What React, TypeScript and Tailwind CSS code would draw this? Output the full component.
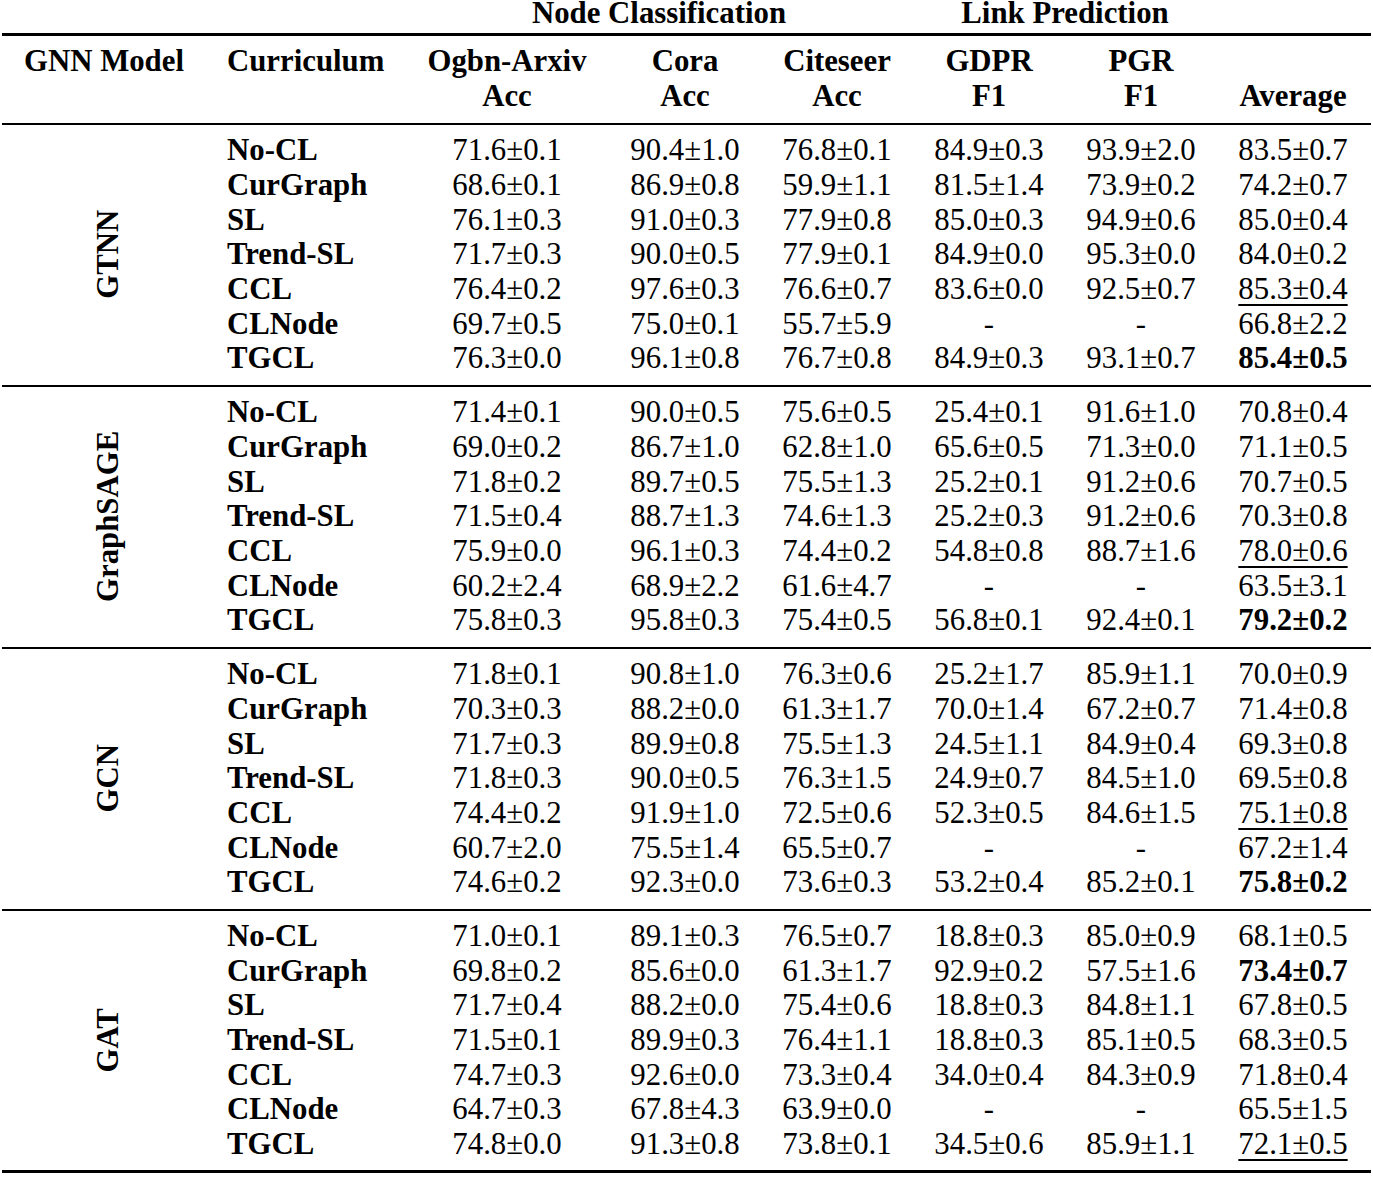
import React from "react";

type Cell = string | { v: string; b?: boolean; u?: boolean };

type Row = { name: string; cells: Cell[] };

const GROUPS: { model: string; rows: Row[] }[] = [
  {
    model: "GTNN",
    rows: [
      { name: "No-CL", cells: ["71.6±0.1", "90.4±1.0", "76.8±0.1", "84.9±0.3", "93.9±2.0", "83.5±0.7"] },
      { name: "CurGraph", cells: ["68.6±0.1", "86.9±0.8", "59.9±1.1", "81.5±1.4", "73.9±0.2", "74.2±0.7"] },
      { name: "SL", cells: ["76.1±0.3", "91.0±0.3", "77.9±0.8", "85.0±0.3", "94.9±0.6", "85.0±0.4"] },
      { name: "Trend-SL", cells: ["71.7±0.3", "90.0±0.5", "77.9±0.1", "84.9±0.0", "95.3±0.0", "84.0±0.2"] },
      { name: "CCL", cells: ["76.4±0.2", "97.6±0.3", "76.6±0.7", "83.6±0.0", "92.5±0.7", { v: "85.3±0.4", u: true }] },
      { name: "CLNode", cells: ["69.7±0.5", "75.0±0.1", "55.7±5.9", "-", "-", "66.8±2.2"] },
      { name: "TGCL", cells: ["76.3±0.0", "96.1±0.8", "76.7±0.8", "84.9±0.3", "93.1±0.7", { v: "85.4±0.5", b: true }] },
    ],
  },
  {
    model: "GraphSAGE",
    rows: [
      { name: "No-CL", cells: ["71.4±0.1", "90.0±0.5", "75.6±0.5", "25.4±0.1", "91.6±1.0", "70.8±0.4"] },
      { name: "CurGraph", cells: ["69.0±0.2", "86.7±1.0", "62.8±1.0", "65.6±0.5", "71.3±0.0", "71.1±0.5"] },
      { name: "SL", cells: ["71.8±0.2", "89.7±0.5", "75.5±1.3", "25.2±0.1", "91.2±0.6", "70.7±0.5"] },
      { name: "Trend-SL", cells: ["71.5±0.4", "88.7±1.3", "74.6±1.3", "25.2±0.3", "91.2±0.6", "70.3±0.8"] },
      { name: "CCL", cells: ["75.9±0.0", "96.1±0.3", "74.4±0.2", "54.8±0.8", "88.7±1.6", { v: "78.0±0.6", u: true }] },
      { name: "CLNode", cells: ["60.2±2.4", "68.9±2.2", "61.6±4.7", "-", "-", "63.5±3.1"] },
      { name: "TGCL", cells: ["75.8±0.3", "95.8±0.3", "75.4±0.5", "56.8±0.1", "92.4±0.1", { v: "79.2±0.2", b: true }] },
    ],
  },
  {
    model: "GCN",
    rows: [
      { name: "No-CL", cells: ["71.8±0.1", "90.8±1.0", "76.3±0.6", "25.2±1.7", "85.9±1.1", "70.0±0.9"] },
      { name: "CurGraph", cells: ["70.3±0.3", "88.2±0.0", "61.3±1.7", "70.0±1.4", "67.2±0.7", "71.4±0.8"] },
      { name: "SL", cells: ["71.7±0.3", "89.9±0.8", "75.5±1.3", "24.5±1.1", "84.9±0.4", "69.3±0.8"] },
      { name: "Trend-SL", cells: ["71.8±0.3", "90.0±0.5", "76.3±1.5", "24.9±0.7", "84.5±1.0", "69.5±0.8"] },
      { name: "CCL", cells: ["74.4±0.2", "91.9±1.0", "72.5±0.6", "52.3±0.5", "84.6±1.5", { v: "75.1±0.8", u: true }] },
      { name: "CLNode", cells: ["60.7±2.0", "75.5±1.4", "65.5±0.7", "-", "-", "67.2±1.4"] },
      { name: "TGCL", cells: ["74.6±0.2", "92.3±0.0", "73.6±0.3", "53.2±0.4", "85.2±0.1", { v: "75.8±0.2", b: true }] },
    ],
  },
  {
    model: "GAT",
    rows: [
      { name: "No-CL", cells: ["71.0±0.1", "89.1±0.3", "76.5±0.7", "18.8±0.3", "85.0±0.9", "68.1±0.5"] },
      { name: "CurGraph", cells: ["69.8±0.2", "85.6±0.0", "61.3±1.7", "92.9±0.2", "57.5±1.6", { v: "73.4±0.7", b: true }] },
      { name: "SL", cells: ["71.7±0.4", "88.2±0.0", "75.4±0.6", "18.8±0.3", "84.8±1.1", "67.8±0.5"] },
      { name: "Trend-SL", cells: ["71.5±0.1", "89.9±0.3", "76.4±1.1", "18.8±0.3", "85.1±0.5", "68.3±0.5"] },
      { name: "CCL", cells: ["74.7±0.3", "92.6±0.0", "73.3±0.4", "34.0±0.4", "84.3±0.9", "71.8±0.4"] },
      { name: "CLNode", cells: ["64.7±0.3", "67.8±4.3", "63.9±0.0", "-", "-", "65.5±1.5"] },
      { name: "TGCL", cells: ["74.8±0.0", "91.3±0.8", "73.8±0.1", "34.5±0.6", "85.9±1.1", { v: "72.1±0.5", u: true }] },
    ],
  },
];

// columns to the right of the model column
const COLS = "grid grid-cols-[226px_178px_152px_152px_152px_152px_152px]";

function Value({ c, first }: { c: Cell; first?: boolean }) {
  const v = typeof c === "string" ? c : c.v;
  const b = typeof c !== "string" && c.b;
  const u = typeof c !== "string" && c.u;
  return (
    <div className={`flex justify-center whitespace-nowrap ${first ? "pr-[26px]" : ""}`}>
      <span
        className={`${b ? "font-bold" : ""} ${u ? "underline decoration-[1.5px] underline-offset-[5px]" : ""}`}
      >
        {v}
      </span>
    </div>
  );
}

function Head({ top, bottom, first }: { top?: string; bottom: string; first?: boolean }) {
  return (
    <div className={`flex flex-col items-center whitespace-nowrap ${first ? "pr-[26px]" : ""}`}>
      <span>{top ?? "\u00a0"}</span>
      <span>{bottom}</span>
    </div>
  );
}

export default function App() {
  return (
    <div
      className="w-[1373px] h-[1177px] bg-white text-black text-[30.8px] leading-[34.67px]"
      style={{ fontFamily: "'Liberation Serif', 'Times New Roman', serif" }}
    >
      <div className="ml-[2px] w-[1369px]">
        {/* task heading */}
        <div className="flex h-[33px] font-bold">
          <div className="w-[203px]" />
          <div className={COLS + " -mt-[4px] whitespace-nowrap"}>
            <div />
            <div className="col-span-3 pr-[26px] text-center">Node Classification</div>
            <div className="col-span-2 text-center">Link Prediction</div>
            <div />
          </div>
        </div>

        {/* column header */}
        <div className="flex border-t-[3px] border-black pt-[8px] pb-[9.5px] font-bold">
          <div className="w-[203px] text-center pl-[1px] whitespace-nowrap">GNN Model</div>
          <div className={COLS}>
            <div className="pl-[22px]">Curriculum</div>
            <Head top="Ogbn-Arxiv" bottom="Acc" first />
            <Head top="Cora" bottom="Acc" />
            <Head top="Citeseer" bottom="Acc" />
            <Head top="GDPR" bottom="F1" />
            <Head top="PGR" bottom="F1" />
            <Head bottom="Average" />
          </div>
        </div>

        {GROUPS.map((g) => (
          <div key={g.model} className="flex py-[8.6px] border-t-2 border-black">
            <div className="w-[203px] flex items-center justify-center pl-[10px]">
              <span className="-rotate-90 whitespace-nowrap font-bold">{g.model}</span>
            </div>
            <div className="flex flex-col">
              {g.rows.map((r) => (
                <div key={r.name} className={COLS}>
                  <div className="pl-[22px] font-bold whitespace-nowrap">{r.name}</div>
                  {r.cells.map((c, i) => (
                    <Value key={i} c={c} first={i === 0} />
                  ))}
                </div>
              ))}
            </div>
          </div>
        ))}
        <div className="border-t-[3px] border-black" />
      </div>
    </div>
  );
}
